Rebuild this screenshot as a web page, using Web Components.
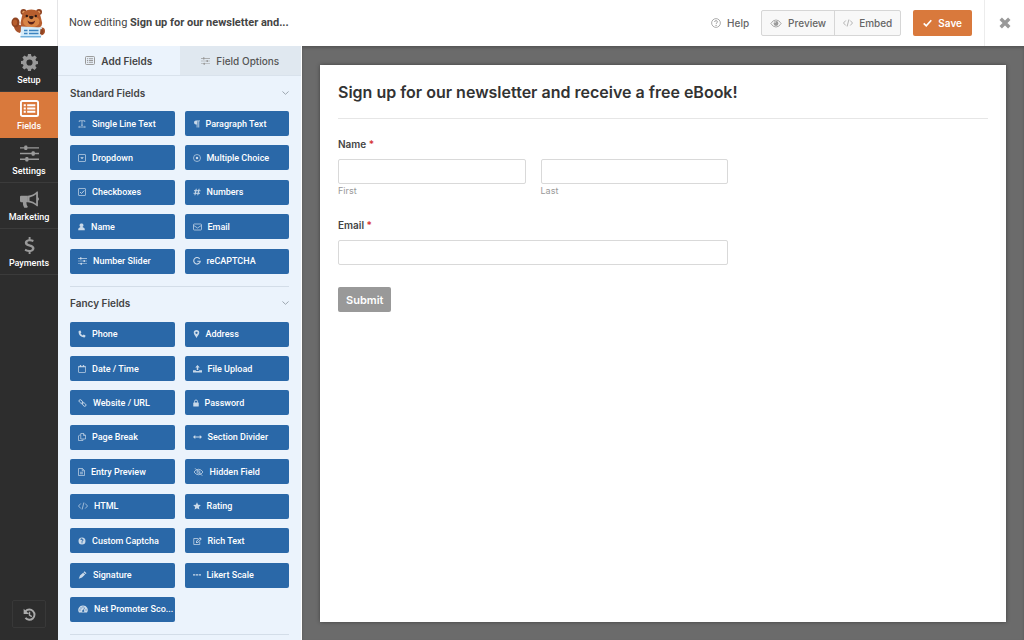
<!DOCTYPE html>
<html lang="en">
<head>
<meta charset="utf-8">
<title>Form Builder</title>
<style>
    html, body {
        height: 100%;
        margin: 0;
    }

    body {
        font-family: Inter, "Liberation Sans", sans-serif;
        font-size: 9px;
        line-height: 12px;
        color: #444;
        --orange: #d9793c;
        --blue: #2a68a8;
        --narrow: Roboto, "Liberation Sans", sans-serif;
    }
</style>
</head>
<body>
<form-builder></form-builder>

<script>
// name: [width, height, drawing]. Everything is painted with currentColor.
const icons = {
    gear: [16, 16, '<path fill-rule="evenodd" d="M6.6 0h2.800l.4 2.100 1.300.5 1.800-1.200 2 2-1.300 1.800.6 1.300 1.800.4v2.600l-2 .4-.5 1.300 1.200 1.800-2 2-1.800-1.300-1.200.5L9.400 16H6.600l-.4-2-1.300-.5-1.800 1.200-2-2 1.300-1.800-.6-1.200L0 9.400V6.700l1.900-.3.6-1.400-1.200-1.700 2-2 1.800 1.200L6.200 2zM8 5.100a2.900 2.900 0 1 0 0 5.800 2.900 2.900 0 0 0 0-5.800z"/>'],
    listAlt: [18, 16, '<rect x=".9" y=".9" width="16.2" height="14.2" rx="1.500" fill="none" stroke="currentColor" stroke-width="1.800"/><path d="M3.500 4h2v1.800h-2zM6.800 4h7.700v1.800H6.800zM3.500 7.100h2v1.800h-2zM6.800 7.100h7.700v1.800H6.800zM3.500 10.200h2V12h-2zM6.800 10.200h7.700V12H6.800z"/>'],
    sliders: [18, 16, '<path d="M0 2h18v1.300H0zM0 7.400h18v1.300H0zM0 12.800h18v1.300H0z"/><rect x="4" y=".5" width="3" height="4.300" rx="1"/><rect x="11" y="5.900" width="3" height="4.300" rx="1"/><rect x="5" y="11.300" width="3" height="4.300" rx="1"/>'],
    horn: [18, 16, '<path d="M0 5.500Q0 4.500 1 4.500h6.500v6H6q0 2.500 1.500 4.500l-1 .8H4q-1.500-2.500-1.300-5.300H1q-1 0-1-1z"/><path fill-rule="evenodd" d="M7.500 4.500Q12.500 4 16 .5h1v5.300q1 .5 1 1.700t-1 1.700v5.300h-1Q12.500 11 7.500 10.500zM9 6v3.200q3.500.3 6.300 2.800V3Q12.500 5.500 9 6z"/>'],
    dollar: [10, 16, '<path d="M4.200 0h1.800v2q1.600.2 3 .9l-.7 1.900Q6.700 4 5.200 4 3 4 3 5.200c0 1 1 1.300 2.600 1.800C8 7.700 9.700 8.600 9.700 10.700c0 1.900-1.500 3.100-3.700 3.400V16H4.200v-1.900Q2 14 .4 13l.8-1.900q1.900 1.100 3.900 1.100c1.400 0 2.200-.5 2.200-1.400 0-1-1-1.400-2.700-1.900C2.300 8.200.6 7.400.6 5.300c0-1.700 1.300-3 3.600-3.300z"/>'],
    history: [16, 16, '<path d="M3.200 4A6.300 6.300 0 1 1 3 12.300" fill="none" stroke="currentColor" stroke-width="2.400"/><path d="M.8 .8v6.500h6.700zM7.100 4.500h1.800v3.700l2.500 1.600-1 1.500-3.300-2.200z"/>'],
    help: [16, 16, '<circle cx="8" cy="8" r="7" fill="none" stroke="currentColor" stroke-width="1.300"/><path d="M5.700 6.400Q5.800 4.200 8 4.200t2.300 2c0 1.500-2.200 1.600-2.200 3.300" fill="none" stroke="currentColor" stroke-width="1.400"/><circle cx="8.100" cy="11.800" r="1"/>'],
    eye: [18, 14, '<path d="M1 7q3.200-5.500 8-5.500T17 7q-3.200 5.500-8 5.500T1 7z" fill="none" stroke="currentColor" stroke-width="1.300"/><circle cx="9" cy="7" r="3.700"/><path d="M6.500 6.500Q7 4.500 9 4.500" fill="none" stroke="#fff" stroke-width="1"/>'],
    code: [18, 14, '<path d="M5 2.500.9 7 5 11.500M13 2.500 17.100 7 13 11.500M10.600.7 7.400 13.300" fill="none" stroke="currentColor" stroke-width="1.300"/>'],
    check: [16, 14, '<path d="M1.300 7.500 5.800 12 14.700 2.200" fill="none" stroke="currentColor" stroke-width="3"/>'],
    times: [14, 14, '<path d="M2 2 12 12M12 2 2 12" stroke="currentColor" stroke-width="4"/>'],
    chevron: [16, 9, '<path d="M1 1l7 6.500L15 1" fill="none" stroke="currentColor" stroke-width="2.200"/>'],
    textWidth: [16, 16, '<path d="M2.500 4V1.500h11V4M8 1.500v9M6 10.500h4M1.500 14h13M3 12.500 1.300 14 3 15.500M13 12.500l1.700 1.500-1.700 1.500" fill="none" stroke="currentColor" stroke-width="1.400"/>'],
    paragraph: [14, 16, '<path d="M6 1h8v1.600h-1.600V15h-1.700V2.600H9V15H7.300V9H6a4 4 0 0 1 0-8z"/>'],
    dropdown: [16, 16, '<rect x="1" y="1" width="14" height="14" rx="1" fill="none" stroke="currentColor" stroke-width="1.400"/><path d="M4.500 6.500h7L8 10.500z"/>'],
    radio: [16, 16, '<circle cx="8" cy="8" r="7" fill="none" stroke="currentColor" stroke-width="1.400"/><circle cx="8" cy="8" r="2.500"/>'],
    checkbox: [16, 16, '<rect x="1" y="1" width="14" height="14" rx="1" fill="none" stroke="currentColor" stroke-width="1.400"/><path d="M4 8l3 3 5.500-6" fill="none" stroke="currentColor" stroke-width="1.800"/>'],
    hash: [16, 16, '<path d="M6.500 1.500l-2.700 13M12.200 1.500l-2.700 13M2 5.500h13M1 10.500h13" fill="none" stroke="currentColor" stroke-width="2"/>'],
    user: [14, 16, '<path d="M7 1a3.600 3.600 0 0 1 2.200 6.700c.2.700.5 1 1.300 1.200 2 .4 3 2.100 3 4.100v1.500H.5V13c0-2 1-3.700 3-4.100.8-.2 1.100-.5 1.300-1.200A3.600 3.600 0 0 1 7 1z"/>'],
    mail: [18, 16, '<rect x="1" y="2" width="16" height="12" rx="1.500" fill="none" stroke="currentColor" stroke-width="1.500"/><path d="M1.500 5 9 10l7.500-5" fill="none" stroke="currentColor" stroke-width="1.500"/>'],
    google: [16, 16, '<path d="M13.300 3.700A6.500 6.500 0 1 0 14.500 8.500H8.500" fill="none" stroke="currentColor" stroke-width="2.300"/>'],
    phone: [16, 16, '<path d="M2.500 1.500 5 1l1.800 3.800L5 6.500Q6.500 9.500 9.500 11l1.700-1.800L15 11l-.5 2.500Q14 15 12.300 15 1.500 14 1 3.700 1 2 2.500 1.500z"/>'],
    pin: [14, 16, '<path fill-rule="evenodd" d="M7 0a5.500 5.500 0 0 1 5.500 5.500C12.500 9 9 12 7 16 5 12 1.500 9 1.500 5.500A5.500 5.500 0 0 1 7 0zm0 3.300a2.300 2.300 0 1 0 0 4.600 2.300 2.300 0 0 0 0-4.600z"/>'],
    calendar: [16, 16, '<rect x="1" y="2.500" width="14" height="12.500" rx="1" fill="none" stroke="currentColor" stroke-width="1.400"/><path d="M1 2.500h14v2H1zM4 0h1.800v3H4zM10.200 0H12v3h-1.800z"/>'],
    upload: [18, 16, '<path d="M9 0l4.500 5h-3v5h-3V5h-3zM0 10.500h5.800V12h6.400v-1.500H18V15H0z"/>'],
    link: [18, 16, '<g fill="none" stroke="currentColor" stroke-width="1.700"><rect x="1.500" y="2.500" width="8.500" height="5" rx="2.500" transform="rotate(40 5.700 5)"/><rect x="8" y="8.500" width="8.500" height="5" rx="2.500" transform="rotate(40 12.200 11)"/><path d="M7.300 6.500l3.400 3"/></g>'],
    lock: [12, 16, '<rect x=".5" y="7" width="11" height="8" rx="1"/><path d="M3 7.500V5a3 3 0 0 1 6 0v2.500" fill="none" stroke="currentColor" stroke-width="1.800"/>'],
    copy: [16, 16, '<path d="M5.500 1h6L15 4.500V12H5.500zM11 1v4h4M5 4H3L1 6v9h9v-2.500" fill="none" stroke="currentColor" stroke-width="1.400"/>'],
    arrows: [18, 16, '<path d="M0 8l4.500-4v3h9V4L18 8l-4.500 4V9h-9v3z"/>'],
    file: [14, 16, '<path d="M1 1h8l4 4v10H1zM8.500 1v4.500H13M4 8.500h6M4 11.500h6" fill="none" stroke="currentColor" stroke-width="1.400"/>'],
    eyeSlash: [22, 16, '<path d="M2 8q3.600-5.500 9-5.500T20 8q-3.600 5.500-9 5.500T2 8zM4 .5 18.500 15.500" fill="none" stroke="currentColor" stroke-width="1.500"/><circle cx="11" cy="8" r="3" fill="none" stroke="currentColor" stroke-width="1.300"/>'],
    star: [16, 16, '<path d="M8 .5l2.300 5 5.400.6-4 3.700 1.100 5.400L8 12.500l-4.800 2.700 1.100-5.400-4-3.700 5.400-.6z"/>'],
    question: [16, 16, '<path fill-rule="evenodd" d="M8 1a7 7 0 1 1 0 14A7 7 0 0 1 8 1zM5 6h2q0-1 1-1t1 1-1 1.300-1 2h2q0-.8 1-1.500T11 6 8 3.200 5 6zm2 4.500v2h2v-2z"/>'],
    edit: [18, 16, '<path d="M10 3H1.500v12h12V9.500" fill="none" stroke="currentColor" stroke-width="1.500"/><path fill-rule="evenodd" d="M14 .5 17.500 4 9.500 12H6V8.500zM13.500 3 7.500 9v1.500H9l6-6z"/>'],
    pencil: [18, 16, '<path d="M13 .5 17 4.300 15 6.200 11 2.500zM10.200 3.300l4 3.700L8 13l-6.500 2.500L4 9z"/>'],
    dots: [16, 16, '<path d="M0 6.500h4.500v2.500H0zM5.700 6.500h4.500v2.500H5.700zM11.500 6.500H16v2.500h-4.500z"/>'],
    gauge: [20, 16, '<path fill-rule="evenodd" d="M10 1a9 9 0 0 1 8 14H2a9 9 0 0 1 8-14zM9 3v2h2V3zM5 5v2h2V5zM3 9v2h2V9zm12 0v2h2V9zm-2.500-4-2 5a2 2 0 1 0 1.200.5l2-5z"/>']
};

function icon(name, height) {
    const [w, h, body] = icons[name];
    const width = Math.round(height * w / h);
    return `<svg width="${width}" height="${height}" viewBox="0 0 ${w} ${h}" fill="currentColor" aria-hidden="true">${body}</svg>`;
}

const base = `
    * { box-sizing: border-box; }
    svg { display: block; flex: none; }
    button { font: inherit; color: inherit; margin: 0; border: 0; padding: 0; background: none; cursor: pointer; }
`;

class BuilderElement extends HTMLElement {
    constructor() {
        super();
        this.attachShadow({mode: 'open'});
    }

    connectedCallback() {
        this.shadowRoot.innerHTML = `<style>${base}</style>` + this.render();
    }
}

class BearLogo extends BuilderElement {
    render() {
        return `
<style>
    :host { display: block; }
</style>
<svg width="36" height="30" viewBox="0 0 36 30" role="img" aria-label="Logo">
    <path d="M28 20q6-2 6 3t-6 4z" fill="#a9532b"/>
    <circle cx="12.500" cy="4" r="3" fill="#8f4422"/><circle cx="28" cy="4" r="3" fill="#8f4422"/>
    <circle cx="12.800" cy="4.300" r="1.500" fill="#e39a5e"/><circle cx="27.700" cy="4.300" r="1.500" fill="#e39a5e"/>
    <path d="M11 8Q12 1.500 20.300 1.500T29.500 8l1.700 7q0 6-11 6T9.500 15z" fill="#b75e2e"/>
    <path d="M12 13q0-3 4-4 4.300-3 8.500 0 4 1 4 4 0 6-8.200 6T12 13z" fill="#d98545"/>
    <circle cx="15.800" cy="8" r="1.200" fill="#2d1a14"/><circle cx="24.800" cy="8" r="1.200" fill="#2d1a14"/>
    <path d="M17.800 8.500q2.500-1.500 5 0-.5 2.500-2.500 2.700-2-.2-2.500-2.700z" fill="#3b2019"/>
    <path d="M16.500 12.500q3.800 3 7.700 0-1 4-3.900 4t-3.800-4z" fill="#5a2018"/>
    <path d="M6 17q5-1 6 3l-3 5q-5-1-6-6z" fill="#a9532b"/>
    <ellipse cx="4.500" cy="14.500" rx="4" ry="5" fill="#8f4422"/><ellipse cx="4" cy="14.500" rx="2.200" ry="3" fill="#b75e2e"/>
    <path d="M10 18.500l21 1-1 9.500H9.500z" fill="#d5ecfa"/>
    <path d="M9.500 28 30 28v1.500H9.500z" fill="#6eaedb"/>
    <path d="M13 22.500h3.500M18 22.500h9.500M13 25.500h3.500M18 25.500h9.500" stroke="#3c83c0" stroke-width="1.300"/>
    <path d="M29.500 21q3.500 0 3 3t-3.500 2z" fill="#8f4422"/>
</svg>`;
    }
}

class BuilderToolbar extends BuilderElement {
    render() {
        return `
<style>
    :host {
        display: flex;
        align-items: center;
        height: 46px;
        background: #fff;
        font-size: 10px;
    }
    .logo {
        display: flex;
        align-items: center;
        justify-content: center;
        width: 58px;
        height: 100%;
        border-right: 1px solid #e4e4e6;
    }
    .title { flex: 1; padding-left: 11px; font-family: var(--narrow); font-size: 11px; white-space: nowrap; }
    .title b { font-weight: 700; }
    button { display: flex; align-items: center; gap: 6px; font-weight: 500; color: #666; }
    svg { color: #999; }
    .group { display: flex; margin: 0 12px; border: 1px solid #d6d6d6; border-radius: 2px; background: #f8f8f8; }
    .group button { height: 24px; padding: 0 8px; }
    .group button + button { border-left: 1px solid #d6d6d6; }
    .save { height: 26px; padding: 0 10px; border-radius: 2px; background: var(--orange); color: #fff; font-weight: 600; }
    .save svg { color: #fff; }
    .close { justify-content: center; width: 40px; height: 100%; margin-left: 12px; border-left: 1px solid #ececec; }
</style>
<div class="logo"><bear-logo></bear-logo></div>
<div class="title">Now editing <b>Sign up for our newsletter and...</b></div>
<button type="button">${icon('help', 10)}Help</button>
<div class="group">
    <button type="button">${icon('eye', 9)}Preview</button>
    <button type="button">${icon('code', 8)}Embed</button>
</div>
<button class="save" type="button">${icon('check', 8)}Save</button>
<button class="close" type="button" aria-label="Close">${icon('times', 12)}</button>`;
    }
}

class BuilderNav extends BuilderElement {
    render() {
        const items = [
            ['gear', 'Setup'],
            ['listAlt', 'Fields'],
            ['sliders', 'Settings'],
            ['horn', 'Marketing'],
            ['dollar', 'Payments']
        ];
        return `
<style>
    :host {
        display: flex;
        flex-direction: column;
        justify-content: space-between;
        width: 58px;
        background: #2d2d2d;
        color: #fff;
        font-family: var(--narrow);
    }
    nav { display: grid; grid-auto-rows: 1fr; min-height: 229px; }
    nav button {
        display: flex;
        flex-direction: column;
        align-items: center;
        justify-content: center;
        gap: 3px;
        padding-top: 3px;
        border-bottom: 1px solid #3b3b3b;
        font-weight: 500;
    }
    nav svg { color: #999; }
    .active { background: var(--orange); border-color: var(--orange); }
    .active svg { color: #fff; }
    .history {
        display: flex;
        align-items: center;
        justify-content: center;
        width: 34px;
        height: 28px;
        margin: 0 auto 12px;
        border: 1px solid #383838;
        border-radius: 2px;
        color: #aaa;
    }
</style>
<nav>
    ${items.map(([name, label]) => `<button type="button"${label === 'Fields' ? ' class="active"' : ''}>${icon(name, 17)}${label}</button>`).join('')}
</nav>
<button class="history" type="button" aria-label="Revisions">${icon('history', 13)}</button>`;
    }
}

class FieldButton extends BuilderElement {
    render() {
        return `
<style>
    :host { display: block; min-width: 0; }
    button {
        display: flex;
        align-items: center;
        gap: 6px;
        width: 100%;
        height: 25px;
        padding-left: 8px;
        border-radius: 2px;
        background: var(--blue);
        color: #fff;
        font-family: var(--narrow);
        font-weight: 500;
        white-space: nowrap;
    }
    svg { opacity: .75; }
</style>
<button type="button">${icon(this.getAttribute('icon'), 8)}<span><slot></slot></span></button>`;
    }
}

class FieldGroup extends BuilderElement {
    render() {
        return `
<style>
    :host { display: flex; flex-direction: column; padding: 0 12px 12px; }
    h2 {
        display: flex;
        align-items: center;
        justify-content: space-between;
        height: 35px;
        margin: 0;
        padding-bottom: 2px;
        font-size: 10px;
        font-weight: 600;
    }
    h2 svg { color: #9aa3ad; }
    .fields {
        flex: 1;
        display: grid;
        grid-template-columns: 1fr 1fr;
        align-content: space-between;
        gap: 9px 10px;
    }
</style>
<h2>${this.getAttribute('heading')}${icon('chevron', 4)}</h2>
<div class="fields"><slot></slot></div>`;
    }
}

class FieldPanel extends BuilderElement {
    render() {
        return `
<style>
    :host {
        display: flex;
        flex-direction: column;
        width: 244px;
        border-right: 1px solid #fff;
        background: #ebf3fc;
        overflow: hidden;
    }
    .tabs { display: flex; height: 30px; flex: none; }
    .tabs button {
        flex: 1;
        display: flex;
        align-items: center;
        justify-content: center;
        gap: 6px;
        border-bottom: 1px solid #d9e2ec;
        background: #e0e8f0;
        font-size: 10px;
        font-weight: 500;
        color: #555;
    }
    .tabs .active { background: none; font-weight: 600; color: #444; }
    .tabs svg { color: #999; }
    .standard { flex: 4 0 auto; }
    .fancy { flex: 8 0 auto; }
    hr { flex: none; width: calc(100% - 24px); height: 1px; margin: 0 auto; border: 0; background: #d3dde8; }
    hr:last-child { margin-bottom: 5px; }
</style>
<div class="tabs">
    <button class="active" type="button">${icon('listAlt', 9)}Add Fields</button>
    <button type="button">${icon('sliders', 8)}Field Options</button>
</div>
<field-group class="standard" heading="Standard Fields">
    <field-button icon="textWidth">Single Line Text</field-button>
    <field-button icon="paragraph">Paragraph Text</field-button>
    <field-button icon="dropdown">Dropdown</field-button>
    <field-button icon="radio">Multiple Choice</field-button>
    <field-button icon="checkbox">Checkboxes</field-button>
    <field-button icon="hash">Numbers</field-button>
    <field-button icon="user">Name</field-button>
    <field-button icon="mail">Email</field-button>
    <field-button icon="sliders">Number Slider</field-button>
    <field-button icon="google">reCAPTCHA</field-button>
</field-group>
<hr>
<field-group class="fancy" heading="Fancy Fields">
    <field-button icon="phone">Phone</field-button>
    <field-button icon="pin">Address</field-button>
    <field-button icon="calendar">Date / Time</field-button>
    <field-button icon="upload">File Upload</field-button>
    <field-button icon="link">Website / URL</field-button>
    <field-button icon="lock">Password</field-button>
    <field-button icon="copy">Page Break</field-button>
    <field-button icon="arrows">Section Divider</field-button>
    <field-button icon="file">Entry Preview</field-button>
    <field-button icon="eyeSlash">Hidden Field</field-button>
    <field-button icon="code">HTML</field-button>
    <field-button icon="star">Rating</field-button>
    <field-button icon="question">Custom Captcha</field-button>
    <field-button icon="edit">Rich Text</field-button>
    <field-button icon="pencil">Signature</field-button>
    <field-button icon="dots">Likert Scale</field-button>
    <field-button icon="gauge">Net Promoter Sco...</field-button>
</field-group>
<hr>`;
    }
}

class FormPreview extends BuilderElement {
    render() {
        return `
<style>
    :host {
        display: flex;
        flex: 1;
        padding: 19px 18px 18px;
        background: #6b6b6b;
        box-shadow: inset 0 2px 3px rgba(0, 0, 0, .2);
    }
    form { flex: 1; padding: 18px; background: #fff; box-shadow: 0 0 4px rgba(0, 0, 0, .4); }
    h1 {
        margin: 0 0 19px;
        padding-bottom: 17px;
        border-bottom: 1px solid #e6e6e6;
        font-size: 16px;
        line-height: 18px;
        font-weight: 600;
        color: #333;
    }
    fieldset { margin: 0 0 22px; border: 0; padding: 0; }
    fieldset, .field { width: 60%; }
    .field { margin-bottom: 22px; }
    legend, .field label {
        display: block;
        margin-bottom: 9px;
        padding: 0;
        font-size: 10px;
        line-height: 12px;
        font-weight: 600;
    }
    i { font-style: normal; color: #d63637; }
    .columns { display: grid; grid-template-columns: 1fr 1fr; gap: 15px; }
    .columns label { display: block; margin-top: 1px; color: #999; }
    input {
        display: block;
        width: 100%;
        height: 25px;
        border: 1px solid #d9d9d9;
        border-radius: 2px;
        padding: 0 6px;
        font: inherit;
        background: #fff;
    }
    .submit {
        height: 25px;
        padding: 0 8px;
        border-radius: 2px;
        background: #999;
        color: #fff;
        font-size: 11px;
        font-weight: 600;
    }
</style>
<form>
    <h1>Sign up for our newsletter and receive a free eBook!</h1>
    <fieldset>
        <legend>Name <i>*</i></legend>
        <div class="columns">
            <div><input id="first" type="text"><label for="first">First</label></div>
            <div><input id="last" type="text"><label for="last">Last</label></div>
        </div>
    </fieldset>
    <div class="field">
        <label for="email">Email <i>*</i></label>
        <input id="email" type="email">
    </div>
    <button class="submit" type="button">Submit</button>
</form>`;
    }
}

class FormBuilder extends BuilderElement {
    render() {
        return `
<style>
    :host { display: flex; flex-direction: column; min-height: 100%; }
    main { flex: 1; display: flex; }
</style>
<builder-toolbar></builder-toolbar>
<main>
    <builder-nav></builder-nav>
    <field-panel></field-panel>
    <form-preview></form-preview>
</main>`;
    }
}

customElements.define('bear-logo', BearLogo);
customElements.define('builder-toolbar', BuilderToolbar);
customElements.define('builder-nav', BuilderNav);
customElements.define('field-button', FieldButton);
customElements.define('field-group', FieldGroup);
customElements.define('field-panel', FieldPanel);
customElements.define('form-preview', FormPreview);
customElements.define('form-builder', FormBuilder);
</script>
</body>
</html>
